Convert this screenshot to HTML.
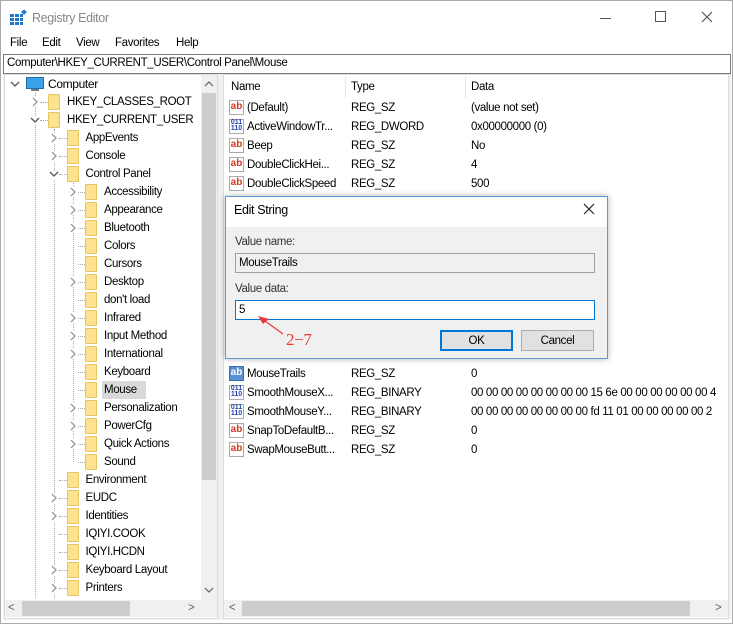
<!DOCTYPE html><html><head><meta charset="utf-8"><style>
*{margin:0;padding:0;box-sizing:border-box}
body{width:733px;height:624px;background:#fff;font-family:"Liberation Sans",sans-serif;font-size:11.5px;letter-spacing:-0.35px;color:#000;position:relative;overflow:hidden}
.a{position:absolute;white-space:nowrap}
.f{position:absolute;width:12px;height:16px;background:#fde38f;border:1px solid #e8c560;border-radius:1px}
.ch{position:absolute}
.ab{position:absolute;width:15px;height:15px;border:1px solid #aaa;background:#fff;color:#d43a1f;font-weight:bold;font-size:10px;line-height:12px;text-align:center;letter-spacing:0}
.bi{position:absolute;width:15px;height:15px;border:1px solid #aaa;background:#fff;color:#1f3fb0;font-weight:bold;font-size:7px;line-height:6px;text-align:center;letter-spacing:0}
</style></head><body>
<div class="a" style="left:0;top:0;width:733px;height:624px;border:1px solid #aaa"></div>
<svg class="a" style="left:10px;top:10px" width="18" height="16"><g fill="#1e78c8"><rect x="0" y="4" width="4" height="3"/><rect x="5" y="4" width="4" height="3"/><rect x="10" y="4" width="3" height="3"/><rect x="0" y="8" width="4" height="3"/><rect x="5" y="8" width="4" height="3"/><rect x="10" y="8" width="3" height="3"/><rect x="0" y="12" width="4" height="3"/><rect x="5" y="12" width="4" height="3"/><rect x="10" y="12" width="3" height="3"/><rect x="12" y="0" width="4" height="4" transform="rotate(45 14 2)"/></g></svg>
<div class="a" style="left:32px;top:11px;color:#888;font-size:12.5px">Registry Editor</div>
<div class="a" style="left:600px;top:18px;width:11px;border-top:1px solid #555"></div>
<div class="a" style="left:655px;top:11px;width:11px;height:11px;border:1px solid #555"></div>
<svg class="a" style="left:701px;top:11px" width="12" height="12"><path d="M1 1L11 11M11 1L1 11" stroke="#555" stroke-width="1.2"/></svg>
<div class="a" style="left:10px;top:37px">File</div><div class="a" style="left:42px;top:37px">Edit</div><div class="a" style="left:76px;top:37px">View</div><div class="a" style="left:115px;top:37px">Favorites</div><div class="a" style="left:176px;top:37px">Help</div>
<div class="a" style="left:3px;top:54px;width:728px;height:20px;border:1px solid #7a7a7a"></div>
<div class="a" style="left:7px;top:57px">Computer\HKEY_CURRENT_USER\Control Panel\Mouse</div>
<div class="a" style="left:3px;top:74px;width:728px;height:546px;background:#f0f0f0"></div>
<div class="a" style="left:4px;top:74px;width:214px;height:545px;background:#fff;border:1px solid #ddd"></div>
<div class="a" style="left:223px;top:74px;width:506px;height:545px;background:#fff;border:1px solid #ddd"></div>
<div class="a" style="left:201px;top:75px;width:16px;height:525px;background:#f0f0f0"></div>
<div class="a" style="left:202px;top:93px;width:14px;height:387px;background:#cdcdcd"></div>
<svg class="a" style="left:204px;top:80px" width="10" height="8"><path d="M1 6L5 2L9 6" stroke="#606060" fill="none" stroke-width="1.2"/></svg>
<svg class="a" style="left:204px;top:586px" width="10" height="8"><path d="M1 2L5 6L9 2" stroke="#606060" fill="none" stroke-width="1.2"/></svg>
<div class="a" style="left:5px;top:600px;width:212px;height:17px;background:#f0f0f0"></div>
<div class="a" style="left:22px;top:601px;width:108px;height:15px;background:#cdcdcd"></div>
<div class="a" style="left:8px;top:602px;color:#606060">&lt;</div><div class="a" style="left:188px;top:602px;color:#606060">&gt;</div>
<div class="a" style="left:224px;top:600px;width:504px;height:17px;background:#f0f0f0"></div>
<div class="a" style="left:242px;top:601px;width:448px;height:15px;background:#cdcdcd"></div>
<div class="a" style="left:229px;top:602px;color:#606060">&lt;</div><div class="a" style="left:715px;top:602px;color:#606060">&gt;</div>
<div class="a" style="left:35px;top:93px;height:505px;border-left:1px dotted #aaa"></div>
<div class="a" style="left:54px;top:129px;height:470px;border-left:1px dotted #aaa"></div>
<div class="a" style="left:73px;top:183px;height:279px;border-left:1px dotted #aaa"></div>
<svg class="a" style="left:10px;top:80px" width="10" height="8"><path d="M1 2L5 6L9 2" stroke="#555" fill="none" stroke-width="1.3"/></svg>
<div class="a" style="left:26px;top:77px;width:18px;height:12px;background:#3aa0e8;border:1px solid #1d6fb0"></div>
<div class="a" style="left:31px;top:89px;width:8px;height:2px;background:#777"></div>
<div class="a" style="left:48px;top:77px;font-size:12px">Computer</div>
<div id="t"></div>
<div class="a" style="left:231px;top:81px">Name</div>
<div class="a" style="left:345px;top:76px;height:22px;border-left:1px solid #e5e5e5"></div>
<div class="a" style="left:351px;top:81px">Type</div>
<div class="a" style="left:465px;top:76px;height:22px;border-left:1px solid #e5e5e5"></div>
<div class="a" style="left:471px;top:81px">Data</div>
<div id="l"></div>
<div class="a" style="left:225px;top:196px;width:383px;height:163px;background:#f0f0f0;border:1px solid #5b9bd5;box-shadow:0 0 6px rgba(0,0,0,.3)"></div>
<div class="a" style="left:226px;top:197px;width:381px;height:30px;background:#fff"></div>
<div class="a" style="left:234px;top:203px;font-size:12.5px">Edit String</div>
<svg class="a" style="left:583px;top:203px" width="12" height="12"><path d="M1 1L11 11M11 1L1 11" stroke="#222" stroke-width="1.2"/></svg>
<div class="a" style="left:235px;top:236px;color:#333">Value name:</div>
<div class="a" style="left:235px;top:253px;width:360px;height:20px;border:1px solid #a0a0a0;background:#f0f0f0"></div>
<div class="a" style="left:239px;top:257px">MouseTrails</div>
<div class="a" style="left:235px;top:283px;color:#333">Value data:</div>
<div class="a" style="left:235px;top:300px;width:360px;height:20px;border:1px solid #0078d7;background:#fff"></div>
<div class="a" style="left:239px;top:304px">5</div>
<div class="a" style="left:440px;top:330px;width:73px;height:21px;border:2px solid #0078d7;background:#e1e1e1;text-align:center;line-height:18px">OK</div>
<div class="a" style="left:521px;top:330px;width:73px;height:21px;border:1px solid #adadad;background:#e1e1e1;text-align:center;line-height:20px">Cancel</div>
<svg class="a" style="left:255px;top:312px" width="40" height="25"><line x1="28" y1="22" x2="6" y2="6" stroke="#e63a3a" stroke-width="1.3"/><polygon points="3,4 14,7 8,12" fill="#e63a3a"/></svg>
<div class="a" style="left:286px;top:330px;color:#e63a3a;font-family:'Liberation Serif',serif;font-size:17px">2−7</div>
<script>
var T=[["HKEY_CLASSES_ROOT",1,">"],["HKEY_CURRENT_USER",1,"v"],["AppEvents",2,">"],["Console",2,">"],["Control Panel",2,"v"],["Accessibility",3,">"],["Appearance",3,">"],["Bluetooth",3,">"],["Colors",3,""],["Cursors",3,""],["Desktop",3,">"],["don't load",3,""],["Infrared",3,">"],["Input Method",3,">"],["International",3,">"],["Keyboard",3,""],["Mouse",3,"",1],["Personalization",3,">"],["PowerCfg",3,">"],["Quick Actions",3,">"],["Sound",3,""],["Environment",2,""],["EUDC",2,">"],["Identities",2,">"],["IQIYI.COOK",2,""],["IQIYI.HCDN",2,""],["Keyboard Layout",2,">"],["Printers",2,">"]];
var h="";T.forEach(function(r,i){var y=93+i*18,L=r[1],fx=48+(L-1)*18.5,cx=30+(L-1)*19;
if(r[2]==">")h+='<svg class="ch" style="left:'+(cx+1)+'px;top:'+(y+4)+'px;background:#fff" width="8" height="10"><path d="M2 1L6 5L2 9" stroke="#999" fill="none" stroke-width="1.3"/></svg>';
else if(r[2]=="v")h+='<svg class="ch" style="left:'+cx+'px;top:'+(y+6)+'px;background:#fff" width="10" height="8"><path d="M1 1L5 5L9 1" stroke="#555" fill="none" stroke-width="1.3"/></svg>';
h+='<div class="a" style="left:'+(cx+10)+'px;top:'+(y+9)+'px;width:'+(fx-cx-10)+'px;border-top:1px dotted #aaa"></div>';
h+='<div class="f" style="left:'+fx+'px;top:'+(y+1)+'px"></div>';
if(r[3])h+='<div class="a" style="left:'+(fx+17)+'px;top:'+y+'px;width:44px;height:18px;background:#d9d9d9"></div>';
h+='<div class="a" style="left:'+(fx+19)+'px;top:'+(y+3)+'px">'+r[0]+'</div>';});
document.getElementById("t").innerHTML=h;
var R=[["(Default)","REG_SZ","(value not set)",0],["ActiveWindowTr...","REG_DWORD","0x00000000 (0)",1],["Beep","REG_SZ","No",0],["DoubleClickHei...","REG_SZ","4",0],["DoubleClickSpeed","REG_SZ","500",0]];
var R2=[["MouseTrails","REG_SZ","0",2],["SmoothMouseX...","REG_BINARY","00 00 00 00 00 00 00 00 15 6e 00 00 00 00 00 00 4",1],["SmoothMouseY...","REG_BINARY","00 00 00 00 00 00 00 00 fd 11 01 00 00 00 00 00 2",1],["SnapToDefaultB...","REG_SZ","0",0],["SwapMouseButt...","REG_SZ","0",0]];
function row(r,y){var s="";if(r[3]==1)s+='<div class="bi" style="left:229px;top:'+(y+1)+'px">011<br>110</div>';else s+='<div class="ab" style="left:229px;top:'+(y+1)+'px;'+(r[3]==2?'background:#5a8fd0;color:#fff;border-color:#3a6fb0':'')+'">ab</div>';
s+='<div class="a" style="left:247px;top:'+(y+3)+'px">'+r[0]+'</div><div class="a" style="left:351px;top:'+(y+3)+'px">'+r[1]+'</div><div class="a" style="left:471px;top:'+(y+3)+'px;width:257px;overflow:hidden">'+r[2]+'</div>';return s;}
h="";R.forEach(function(r,i){h+=row(r,99+i*19)});R2.forEach(function(r,i){h+=row(r,365+i*19)});
document.getElementById("l").innerHTML=h;
</script>
</body></html>
